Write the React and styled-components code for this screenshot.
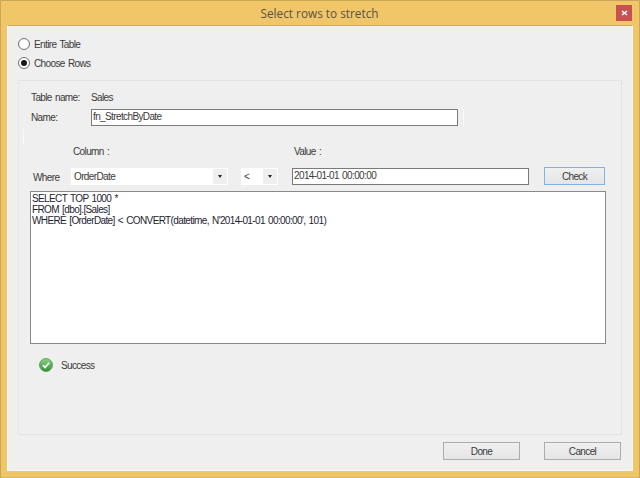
import React from 'react';
import styled, { createGlobalStyle } from 'styled-components';

const Global = createGlobalStyle`
  html, body { margin: 0; padding: 0; background: #f0c669; }
  * { box-sizing: border-box; }
`;

const Window = styled.div`
  width: 640px;
  height: 478px;
  display: flex;
  flex-direction: column;
  background: #f0c669;
  border: 1px solid #c9a757;
  border-bottom-color: #d9b560;
  font-family: "Liberation Sans", Arial, sans-serif;
  font-size: 10px;
  letter-spacing: -0.62px;
  word-spacing: 1px;
  color: #3a3a3a;
`;

const TitleBar = styled.div`
  height: 24px;
  flex: none;
  display: flex;
  align-items: center;
  padding-right: 7px;
`;

const Title = styled.div`
  flex: 1;
  padding-left: 22px;
  text-align: center;
  font-family: "Open Sans", sans-serif;
  font-size: 11.8px;
  letter-spacing: 0;
  word-spacing: 0;
  color: #5a5342;
`;

const CloseButton = styled.div`
  width: 16px;
  height: 16px;
  background: #c75050;
  display: flex;
  align-items: center;
  justify-content: center;
`;

const Content = styled.div`
  flex: 1;
  margin: 0 6px 6px 6px;
  background: #efefef;
  border-top: 1px solid #cfae5e;
  border-left: 1px solid #fafafa;
  border-right: 1px solid #fafafa;
  border-bottom: 1px solid #fafafa;
  padding: 11px 10px 0 10px;
  display: flex;
  flex-direction: column;
`;

const RadioRow = styled.div`
  display: flex;
  align-items: center;
  height: 13px;
  gap: 4px;
  margin-bottom: ${p => p.$gap}px;
`;

const RadioLabel = styled.span`
  padding-top: 1px;
`;

const RadioCircle = styled.div`
  width: 12px;
  height: 12px;
  border-radius: 50%;
  border: 1px solid #6e6e6e;
  background: #fff;
  display: flex;
  align-items: center;
  justify-content: center;
  &::after {
    content: "";
    display: ${p => (p.$checked ? 'block' : 'none')};
    width: 6px;
    height: 6px;
    border-radius: 50%;
    background: #1a1a1a;
  }
`;

const Panel = styled.div`
  height: 355px;
  border: 1px solid #e3e3e3;
  border-left-color: #e8e8e8;
  display: flex;
  flex-direction: column;
  padding-top: 9px;
`;

const InfoRow = styled.div`
  display: flex;
  align-items: center;
  height: 14px;
  padding-left: 12px;
`;

const InfoLabel = styled.div`
  width: 60px;
  flex: none;
`;

const NameRow = styled.div`
  display: flex;
  align-items: center;
  height: 18px;
  margin-top: 4px;
  padding-left: 12px;
`;

const TextBox = styled.div`
  width: ${p => p.$width}px;
  height: 17px;
  flex: none;
  border: 1px solid #7a7a7a;
  background: #fff;
  padding-left: 1px;
  line-height: 13px;
  white-space: nowrap;
  overflow: hidden;
`;

const Divider = styled.div`
  width: 1px;
  height: 17px;
  background: #fafafa;
  margin-left: 5px;
`;

const FaintEdge = styled.div`
  width: 1px;
  height: 16px;
  margin: 3px 0 0 4px;
  background: #fafafa;
  flex: none;
`;

const ColumnLabels = styled.div`
  display: flex;
  height: 14px;
  padding: 1px 0 0 54px;
`;

const ColumnLabel = styled.div`
  width: ${p => p.$width}px;
`;

const WhereRow = styled.div`
  display: flex;
  align-items: center;
  height: 18px;
  margin-top: 8px;
  padding-left: 14px;
`;

const WhereLabel = styled.div`
  width: 38px;
  flex: none;
  padding-top: 2px;
`;

const Select = styled.div`
  width: ${p => p.$width}px;
  height: 17px;
  flex: none;
  margin-right: ${p => p.$gap}px;
  background: #fff;
  display: flex;
  align-items: center;
  justify-content: space-between;
  padding: 1px 1px 1px 3px;
`;

const SelectArrow = styled.div`
  width: 14px;
  height: 15px;
  background: #efefef;
  display: flex;
  align-items: center;
  justify-content: center;
  &::after {
    content: "";
    border-left: 2.5px solid transparent;
    border-right: 2.5px solid transparent;
    border-top: 3px solid #222;
  }
`;

const Button = styled.div`
  width: ${p => p.$width}px;
  height: 18px;
  flex: none;
  margin-left: ${p => p.$left || 0}px;
  display: flex;
  align-items: center;
  justify-content: center;
  background: linear-gradient(#f0f0f0, #e5e5e5);
  border: 1px solid ${p => (p.$focused ? '#7eb4ea' : '#acacac')};
`;

const SqlBox = styled.div`
  width: 576px;
  height: 153px;
  margin: 6px 0 0 11px;
  border: 1px solid #8a8a8a;
  background: #fff;
  padding: 1px 1px;
  line-height: 11px;
  color: #1c2433;
`;

const StatusRow = styled.div`
  display: flex;
  align-items: center;
  gap: 8px;
  margin: 14px 0 0 20px;
  height: 14px;
`;

const Footer = styled.div`
  display: flex;
  justify-content: flex-end;
  gap: 24px;
  margin-top: 7px;
  padding-right: 1px;
`;

function App() {
  return (
    <Window>
      <Global />
      <TitleBar>
        <Title>Select rows to stretch</Title>
        <CloseButton>
          <svg width="7" height="6" viewBox="0 0 7 6">
            <path d="M1 1 L6 5 M6 1 L1 5" stroke="#fff" strokeWidth="1.6" />
          </svg>
        </CloseButton>
      </TitleBar>
      <Content>
        <RadioRow $gap={6}>
          <RadioCircle />
          <RadioLabel>Entire Table</RadioLabel>
        </RadioRow>
        <RadioRow $gap={11}>
          <RadioCircle $checked />
          <RadioLabel>Choose Rows</RadioLabel>
        </RadioRow>
        <Panel>
          <InfoRow>
            <InfoLabel>Table name:</InfoLabel>
            <span>Sales</span>
          </InfoRow>
          <NameRow>
            <InfoLabel>Name:</InfoLabel>
            <TextBox $width={367}>fn_StretchByDate</TextBox>
            <Divider />
          </NameRow>
          <FaintEdge />
          <ColumnLabels>
            <ColumnLabel $width={221}>Column :</ColumnLabel>
            <ColumnLabel $width={60}>Value :</ColumnLabel>
          </ColumnLabels>
          <WhereRow>
            <WhereLabel>Where</WhereLabel>
            <Select $width={157} $gap={13}>
              OrderDate
              <SelectArrow />
            </Select>
            <Select $width={37} $gap={14}>
              &lt;
              <SelectArrow />
            </Select>
            <TextBox $width={237}>2014-01-01 00:00:00</TextBox>
            <Button $width={61} $focused $left={15}>Check</Button>
          </WhereRow>
          <SqlBox>
            SELECT TOP 1000 *<br />
            FROM [dbo].[Sales]<br />
            WHERE [OrderDate] &lt; CONVERT(datetime, N'2014-01-01 00:00:00', 101)
          </SqlBox>
          <StatusRow>
            <svg width="14" height="14" viewBox="0 0 14 14">
              <defs>
                <linearGradient id="ok" x1="0" y1="0" x2="0" y2="1">
                  <stop offset="0" stopColor="#8fd08a" />
                  <stop offset="1" stopColor="#2f8f36" />
                </linearGradient>
              </defs>
              <circle cx="7" cy="7" r="6.5" fill="url(#ok)" stroke="#4a9a4c" strokeWidth="0.8" />
              <path d="M3.8 7.2 L6 9.4 L10.2 4.8" fill="none" stroke="#fff" strokeWidth="1.7" />
            </svg>
            <span>Success</span>
          </StatusRow>
        </Panel>
        <Footer>
          <Button $width={77}>Done</Button>
          <Button $width={77}>Cancel</Button>
        </Footer>
      </Content>
    </Window>
  );
}

export default App;
